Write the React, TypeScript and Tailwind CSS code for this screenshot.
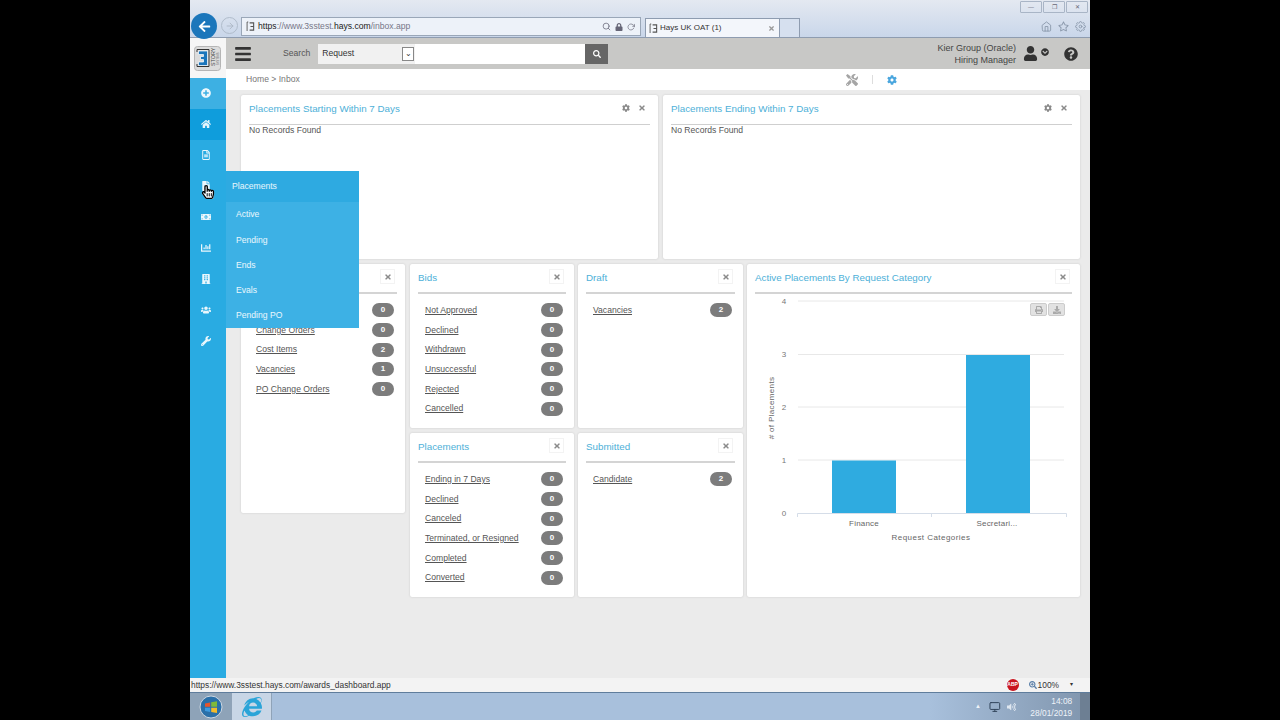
import React from "react"
import {
  FaArrowLeft,
  FaBars,
  FaBuilding,
  FaChartBar,
  FaChevronCircleDown,
  FaCog,
  FaDownload,
  FaFileAlt,
  FaHandPointer,
  FaHome,
  FaInternetExplorer,
  FaLock,
  FaMoneyBillAlt,
  FaPlusCircle,
  FaPrint,
  FaQuestionCircle,
  FaRegFileAlt,
  FaRegHandPointer,
  FaRegStar,
  FaSearch,
  FaSearchPlus,
  FaTimes,
  FaTools,
  FaUser,
  FaUsers,
  FaVolumeUp,
  FaWrench,
} from "react-icons/fa"
import { FiHome, FiSettings, FiArrowRight, FiMonitor, FiRotateCw, FiSearch } from "react-icons/fi"

type Row = { label: string; count: number }

const sideIcons = [
  { Icon: FaPlusCircle, cls: "bg-[#3db0e3]" },
  { Icon: FaHome, cls: "bg-[#0f9ddc]" },
  { Icon: FaRegFileAlt, cls: "" },
  { Icon: FaFileAlt, cls: "" },
  { Icon: FaMoneyBillAlt, cls: "" },
  { Icon: FaChartBar, cls: "" },
  { Icon: FaBuilding, cls: "" },
  { Icon: FaUsers, cls: "" },
  { Icon: FaWrench, cls: "" },
]

const approvals: Row[] = [
  { label: "", count: 0 },
  { label: "Change Orders", count: 0 },
  { label: "Cost Items", count: 2 },
  { label: "Vacancies", count: 1 },
  { label: "PO Change Orders", count: 0 },
]
const bids: Row[] = [
  { label: "Not Approved", count: 0 },
  { label: "Declined", count: 0 },
  { label: "Withdrawn", count: 0 },
  { label: "Unsuccessful", count: 0 },
  { label: "Rejected", count: 0 },
  { label: "Cancelled", count: 0 },
]
const placements: Row[] = [
  { label: "Ending in 7 Days", count: 0 },
  { label: "Declined", count: 0 },
  { label: "Canceled", count: 0 },
  { label: "Terminated, or Resigned", count: 0 },
  { label: "Completed", count: 0 },
  { label: "Converted", count: 0 },
]

const menuItems = ["Active", "Pending", "Ends", "Evals", "Pending PO"]

function CloseBtn() {
  return (
    <span className="mr-[2px] mb-[3px] flex h-[15px] w-[15px] items-center justify-center border border-[#f3f3f3] text-[#8a8a8a]">
      <FaTimes size={8} />
    </span>
  )
}

function CountCard({ title, rows, className }: { title: string; rows: Row[]; className: string }) {
  return (
    <div className={"rounded-[2px] bg-white shadow-[0_0_2px_#c4c4c4] " + className}>
      <div className="mx-[8px] flex h-[30px] items-center justify-between border-b-2 border-[#d4d4d4]">
        <span className="text-[9.8px] text-[#4db0d8]">{title}</span>
        <CloseBtn />
      </div>
      <div className="pt-[6.5px] pr-[11px] pl-[15px]">
        {rows.map((row, i) => (
          <div key={i} className="flex h-[19.67px] items-center justify-between">
            <span className="text-[8.6px] text-[#555] underline">{row.label}</span>
            <span className="flex h-[14px] w-[22px] items-center justify-center rounded-full bg-[#7c7c7c] text-[8px] font-bold text-white">
              {row.count}
            </span>
          </div>
        ))}
      </div>
    </div>
  )
}

function RecordsCard({ title }: { title: string }) {
  return (
    <div className="h-[164px] flex-1 rounded-[2px] bg-white px-[8px] shadow-[0_0_2px_#c4c4c4]">
      <div className="flex h-[30px] items-center justify-between border-b border-[#cfcfcf]">
        <span className="text-[9.8px] text-[#4db0d8]">{title}</span>
        <span className="flex items-center gap-[8px] pr-[4px] pb-[3px] text-[#8a8a8a]">
          <FaCog size={8} />
          <FaTimes size={8} />
        </span>
      </div>
      <p className="text-[8.6px] leading-[10px] text-[#555]">No Records Found</p>
    </div>
  )
}

function BarChart() {
  return (
    <svg viewBox="747 294 333 303" className="h-[303px] w-[333px]">
      {[301, 354.5, 407, 460].map((y) => (
        <line key={y} x1="798" x2="1064" y1={y} y2={y} stroke="#e8e8e8" strokeWidth="1" />
      ))}
      {[
        ["4", 304],
        ["3", 357],
        ["2", 410],
        ["1", 463],
        ["0", 516],
      ].map(([n, y]) => (
        <text key={n} x="784" y={y} fontSize="8" fill="#777" textAnchor="middle">
          {n}
        </text>
      ))}
      <rect x="832" y="460.5" width="64" height="53" fill="#2fabe0" />
      <rect x="966" y="355" width="64" height="158.5" fill="#2fabe0" />
      <path d="M797.5 517V513.5H1066.5V517M931.5 513.5V517" fill="none" stroke="#d5dde8" />
      <text x="864" y="526" fontSize="8" fill="#666" textAnchor="middle" letterSpacing="0.2">
        Finance
      </text>
      <text x="997" y="526" fontSize="8" fill="#666" textAnchor="middle" letterSpacing="0.2">
        Secretari...
      </text>
      <text x="931" y="540" fontSize="8" fill="#666" textAnchor="middle" letterSpacing="0.45">
        Request Categories
      </text>
      <text x="774" y="408" fontSize="8" fill="#666" textAnchor="middle" letterSpacing="0.35" transform="rotate(-90 774 408)">
        # of Placements
      </text>
    </svg>
  )
}

function Logo() {
  return (
    <svg viewBox="0 0 27 25" className="h-[25px] w-[27px]">
      <rect x="0.5" y="0.5" width="26" height="24" rx="3" fill="#dcdcdc" stroke="#b5b5b5" />
      <path d="M3 6V3.5H15V20.5H3V18" fill="none" stroke="#333" strokeWidth="1" />
      <path d="M4.5 5H13.5V19.5H4.5V16H9.5V13.5H6.5V10.5H9.5V8.5H4.5Z" fill="#1b75bb" stroke="#fff" strokeWidth="0.7" />
      <text x="0" y="0" fontSize="5.4" fill="#444" transform="translate(21 20) rotate(-90)" fontFamily="'Liberation Sans', sans-serif">
        STORY
      </text>
      <text x="0" y="0" fontSize="2.6" fill="#666" transform="translate(25 19) rotate(-90)" fontFamily="'Liberation Sans', sans-serif">
        SYSTEMS
      </text>
    </svg>
  )
}

function TabIcon() {
  return (
    <svg viewBox="0 0 10 12" className="h-[11px] w-[9px] shrink-0" fill="none" stroke="#555">
      <path d="M2.5 1H1.2V11" />
      <path d="M4 2H8.5V10H4M5 6H8.5" strokeWidth="1.2" />
    </svg>
  )
}

function StartOrb() {
  return (
    <svg viewBox="0 0 24 24" className="h-[24px] w-[24px]">
      <circle cx="12" cy="12" r="11" fill="#2a6fa8" />
      <circle cx="12" cy="12" r="11" fill="none" stroke="#cfd8e2" strokeWidth="1" />
      <path d="M6 8.5l5.2-1v4.2H6z" fill="#e8552a" />
      <path d="M12.2 7.2l5.8-.9v5.4h-5.8z" fill="#7fba3a" />
      <path d="M6 12.7h5.2v4.2L6 16z" fill="#3d9be0" />
      <path d="M12.2 12.7H18v5.2l-5.8-.9z" fill="#f4bb2a" />
    </svg>
  )
}

function BrowserChrome() {
  return (
    <div className="relative flex h-[38px] shrink-0 items-end border-b border-[#8e9cb0] bg-gradient-to-b from-[#e4e9f1] to-[#c9d6ea]">
      <div className="flex h-[37px] w-[51px] shrink-0 items-end gap-[4px] pl-[1px]">
        <span className="mb-[-2px] flex h-[26px] w-[26px] items-center justify-center rounded-full bg-[#1b76bb] text-white">
          <FaArrowLeft size={13} />
        </span>
        <span className="mb-[3px] flex h-[17px] w-[17px] items-center justify-center rounded-full border border-[#b0bccb] text-[#a9b4c2]">
          <FiArrowRight size={10} />
        </span>
      </div>
      <div className="mb-[1px] flex h-[19px] w-[400px] shrink-0 items-center justify-between border border-[#9aa7b8] bg-[#edf2f9] pr-[5px] pl-[4px]">
        <span className="flex items-center gap-[3px] text-[8.6px] text-[#778]">
          <TabIcon />
          <span className="whitespace-nowrap">
            <b className="font-normal text-[#222]">https</b>://www.3sstest.<b className="font-normal text-[#222]">hays.com</b>/inbox.app
          </span>
        </span>
        <span className="flex items-center gap-[4px] text-[#667]">
          <FiSearch size={9} />
          <FaLock size={8} />
          <FiRotateCw size={8} />
        </span>
      </div>
      <div className="ml-[4px] flex h-[19px] w-[135px] shrink-0 items-center justify-between border border-b-0 border-[#8e9cb0] bg-[#f3f6fb] pr-[4px] pl-[3px] text-[8px] text-[#333]">
        <span className="flex items-center gap-[2px]">
          <TabIcon />
          Hays UK OAT (1)
        </span>
        <FaTimes size={7} className="text-[#999]" />
      </div>
      <div className="h-[19px] w-[20px] shrink-0 border border-b-0 border-l-0 border-[#8e9cb0] bg-[#d6e0ef]" />
      <div className="flex h-[37px] flex-1 flex-col items-end justify-between pr-[2px]">
        <div className="mt-[1px] flex gap-[1px]">
          {["—", "❐", "✕"].map((g) => (
            <span key={g} className="flex h-[12px] w-[22px] items-center justify-center rounded-[1px] border border-[#a9b5c6] text-[6px] leading-none text-[#667]">
              {g}
            </span>
          ))}
        </div>
        <div className="mr-[2px] mb-[5px] flex items-center gap-[6px] text-[#8b99ac]">
          <FiHome size={11} />
          <FaRegStar size={11} />
          <FiSettings size={11} />
        </div>
      </div>
    </div>
  )
}

export default function App() {
  return (
    <div className="flex h-[720px] w-[1280px] justify-center overflow-hidden bg-black font-['Liberation_Sans',Arial,sans-serif]">
      <div className="relative flex h-full w-[900px] flex-col bg-[#ebebeb]">
        <BrowserChrome />

        <div className="flex min-h-0 flex-1">
          {/* left nav */}
          <aside className="flex w-[36px] shrink-0 flex-col bg-[#29abe2]">
            <div className="flex h-[40px] items-start justify-start bg-[#f6f6f6] pt-[8px] pl-[4px]">
              <Logo />
            </div>
            <div>
              {sideIcons.map(({ Icon, cls }, i) => (
                <div key={i} className={"flex h-[31px] items-center justify-center pr-[4px] pb-[2px] text-white/90 " + cls}>
                  <Icon size={10} />
                </div>
              ))}
            </div>
          </aside>

          <main className="min-w-0 flex-1">
            <div className="flex h-[31px] items-center bg-[#c8c8c6]">
              <span className="ml-[8px] text-[#333]">
                <FaBars size={18} />
              </span>
              <span className="ml-[31px] text-[8.6px] text-[#555]">Search</span>
              <div className="ml-[8px] flex h-[20px] w-[267px] items-center bg-white">
                <div className="flex h-full w-[97px] items-center justify-between bg-[#f1f1f1] pr-[1px] pl-[4px] text-[8.6px] text-[#333]">
                  Request
                  <span className="flex h-[14px] w-[12px] items-center justify-center border border-[#888] bg-white text-[8px] leading-none">
                    ⌄
                  </span>
                </div>
              </div>
              <span className="flex h-[20px] w-[23px] items-center justify-center bg-[#666] text-white">
                <FaSearch size={8} />
              </span>
              <div className="ml-auto text-right text-[9px] leading-[12px] text-[#444]">
                <div>Kier Group (Oracle)</div>
                <div>Hiring Manager</div>
              </div>
              <span className="ml-[7px] text-[#333]">
                <FaUser size={15} />
              </span>
              <span className="mb-[3px] ml-[3px] text-[#333]">
                <FaChevronCircleDown size={8} />
              </span>
              <span className="mr-[12px] ml-[15px] text-[#333]">
                <FaQuestionCircle size={14} />
              </span>
            </div>

            <div className="flex h-[21px] items-center bg-white pl-[20px] text-[8.6px] text-[#777]">
              <span>Home &gt; Inbox</span>
              <span className="ml-[546px] flex items-center gap-[14px]">
                <FaTools size={12} className="text-[#a5a5a5]" />
                <span className="h-[9px] w-px bg-[#ddd]" />
                <FaCog size={10} className="text-[#4aa6de]" />
              </span>
            </div>

            <div className="flex flex-col gap-[5px] pt-[5px] pr-[10px] pl-[15px]">
              <div className="flex gap-[5px]">
                <RecordsCard title="Placements Starting Within 7 Days" />
                <RecordsCard title="Placements Ending Within 7 Days" />
              </div>
              <div className="flex gap-[4px]">
                <CountCard title="" rows={approvals} className="mr-[1px] h-[249px] w-[164px]" />
                <div className="flex w-[333px] flex-col gap-[5px]">
                  <div className="flex gap-[4px]">
                    <CountCard title="Bids" rows={bids} className="h-[164px] w-[164px]" />
                    <CountCard title="Draft" rows={[{ label: "Vacancies", count: 2 }]} className="h-[164px] w-[165px]" />
                  </div>
                  <div className="flex gap-[4px]">
                    <CountCard title="Placements" rows={placements} className="h-[164px] w-[164px]" />
                    <CountCard title="Submitted" rows={[{ label: "Candidate", count: 2 }]} className="h-[164px] w-[165px]" />
                  </div>
                </div>
                <div className="relative h-[333px] w-[333px] rounded-[2px] bg-white shadow-[0_0_2px_#c4c4c4]">
                  <div className="mx-[8px] flex h-[30px] items-center justify-between border-b-2 border-[#d4d4d4]">
                    <span className="text-[9.8px] text-[#4db0d8]">Active Placements By Request Category</span>
                    <CloseBtn />
                  </div>
                  <BarChart />
                  <div className="absolute top-[39px] right-[15px] flex gap-[1px] text-[#aaa]">
                    <span className="flex h-[13px] w-[17px] items-center justify-center rounded-[2px] border border-[#ccc] bg-[#e2e2e2]">
                      <FaPrint size={8} />
                    </span>
                    <span className="flex h-[13px] w-[17px] items-center justify-center rounded-[2px] border border-[#ccc] bg-[#e2e2e2]">
                      <FaDownload size={8} />
                    </span>
                  </div>
                </div>
              </div>
            </div>
          </main>
        </div>

        {/* status bar */}
        <div className="flex h-[14px] shrink-0 items-center justify-between bg-[#f3f3f3] pr-[17px] text-[8.4px] text-[#333]">
          <span className="pl-[1px]">https://www.3sstest.hays.com/awards_dashboard.app</span>
          <span className="flex items-center">
            <span className="flex h-[12px] w-[12px] items-center justify-center rounded-full bg-[#c9141e] text-[5px] font-bold text-white">
              ABP
            </span>
            <FaSearchPlus size={8} className="ml-[10px] text-[#5a7fa8]" />
            <span className="ml-[1px]">100%</span>
            <span className="ml-[11px] text-[6px]">▾</span>
          </span>
        </div>

        {/* taskbar */}
        <div className="flex h-[28px] shrink-0 items-center border-t border-[#5f7d9c] bg-[#a8c0dc]">
          <span className="flex h-full w-[41px] items-center justify-center bg-[#8ea3b8]">
            <StartOrb />
          </span>
          <span className="flex h-full w-[41px] items-center justify-center border-x border-[#8fa3b8] bg-[#c8d6e6] text-[#2aa4d8]">
            <FaInternetExplorer size={20} />
          </span>
          <div className="ml-auto flex h-full w-[160px] items-center gap-[8px] bg-gradient-to-r from-[#a8c0dc] to-[#8095ad] pl-[45px] text-[#eef3f9]">
            <span className="text-[6px]">▲</span>
            <FiMonitor size={12} className="text-[#2f4258]" />
            <FaVolumeUp size={10} className="ml-[-2px] text-[#dfe7f0]" />
            <div className="ml-[6px] text-right text-[8.4px] leading-[12px] whitespace-nowrap">
              <div>14:08</div>
              <div>28/01/2019</div>
            </div>
            <span className="ml-auto h-full w-[10px] bg-[#6d7f93]" />
          </div>
        </div>

        {/* hover flyout for the placements nav item */}
        <div className="absolute top-[171px] left-[36px] w-[133px] bg-[#3db1e5] text-white/90">
          <div className="flex h-[31px] items-center bg-[#2eaae1] pl-[6px] text-[8.6px]">Placements</div>
          <div className="flex flex-col">
            {menuItems.map((item) => (
              <div key={item} className="flex h-[25.3px] items-center pl-[10px] text-[8.6px]">
                {item}
              </div>
            ))}
          </div>
        </div>

        {/* mouse pointer */}
        <span className="absolute top-[185px] left-[11px] text-white">
          <FaHandPointer size={14} />
        </span>
        <span className="absolute top-[185px] left-[11px] text-black">
          <FaRegHandPointer size={14} />
        </span>
      </div>
    </div>
  )
}
